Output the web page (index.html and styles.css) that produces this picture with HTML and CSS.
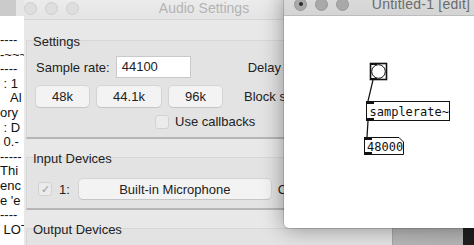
FILE: index.html
```
<!DOCTYPE html>
<html lang="en">
<head>
    <meta charset="UTF-8">
    <title>Pd - Audio Settings</title>
    <link rel="stylesheet" href="styles.css">
</head>
<body>

    <!-- Pd main window, mostly hidden behind the dialog -->
    <div class="console">
        <div class="console-bar"></div>
        <div class="console-log">
            <div>----</div>
            <div>-~~~</div>
            <div>----</div>
            <div> : 1</div>
            <div>   Al</div>
            <div>ory</div>
            <div> : D</div>
            <div> 0.-</div>
            <div>-----</div>
            <div>Thi</div>
            <div>enc</div>
            <div>e 'e</div>
            <div>----</div>
            <div> LOT</div>
        </div>
    </div>

    <div class="window audio">
        <div class="titlebar">
            <div class="lights">
                <span class="light"></span>
                <span class="light"></span>
                <span class="light"></span>
            </div>
            <div class="title">Audio Settings</div>
        </div>

        <div class="audio-body">
            <section class="group">
                <div class="group-title">Settings</div>
                <div class="row">
                    <span class="label">Sample rate:</span>
                    <span class="entry">44100</span>
                    <span class="side">Delay (msec):</span>
                </div>
                <div class="row row-buttons">
                    <button class="btn btn-small">48k</button>
                    <button class="btn btn-mid">44.1k</button>
                    <button class="btn btn-small">96k</button>
                    <span class="side side-block">Block size:</span>
                </div>
                <div class="row row-check">
                    <span class="check"></span>
                    <span class="label">Use callbacks</span>
                </div>
            </section>

            <section class="group">
                <div class="group-title">Input Devices</div>
                <div class="row row-device">
                    <span class="check checked">&#10003;</span>
                    <span class="num">1:</span>
                    <button class="btn device">Built-in Microphone</button>
                    <span class="chan">Channels:</span>
                    <span class="entry entry-chan">2</span>
                </div>
            </section>

            <section class="group">
                <div class="group-title">Output Devices</div>
                <div class="row row-device row-out">
                    <span class="check checked">&#10003;</span>
                    <span class="num">1:</span>
                    <button class="btn device">Built-in Output</button>
                    <span class="chan">Channels:</span>
                    <span class="entry entry-chan">2</span>
                </div>
            </section>
        </div>
    </div>

    <div class="window patch">
        <div class="titlebar patch-bar">
            <div class="lights">
                <span class="light dirty"></span>
                <span class="light"></span>
                <span class="light"></span>
            </div>
            <div class="title">Untitled-1 [edit]</div>
        </div>

        <svg class="canvas" width="264" height="212" viewBox="0 0 264 212">
            <!-- cords -->
            <line x1="89" y1="64" x2="84" y2="85" class="cord"/>
            <line x1="84" y1="105" x2="83" y2="121" class="cord"/>

            <!-- bng -->
            <rect x="86.5" y="47.5" width="16" height="16" class="box thick"/>
            <circle cx="94.5" cy="55.5" r="6.8" class="box"/>
            <rect x="86" y="47" width="7" height="2" class="port"/>
            <rect x="86" y="62" width="7" height="2" class="port"/>

            <!-- samplerate~ -->
            <rect x="82.5" y="85.5" width="83" height="19" class="box"/>
            <rect x="82" y="85" width="8" height="3" class="port"/>
            <rect x="82" y="102" width="8" height="3" class="port"/>
            <text x="85.5" y="100" class="obj-text">samplerate~</text>

            <!-- number box -->
            <path d="M80.5 121.5 H115 L119.5 126 V138.5 H80.5 Z" class="box"/>
            <rect x="80" y="121" width="8" height="3" class="port"/>
            <rect x="80" y="136" width="8" height="3" class="port"/>
            <text x="83" y="135" class="obj-text">48000</text>
        </svg>
    </div>

</body>
</html>
```

FILE: styles.css
```
body {
    margin: 0;
    width: 474px;
    height: 245px;
    overflow: hidden;
    position: relative;
    background: linear-gradient(to right, #c4c4c4 0, #b4b4b4 463px, #1f1f1f 463px);
    font-family: 'Liberation Sans', Arial, sans-serif;
    font-size: 13px;
    color: #222;
}

/* Pd main window (console) */
.console {
    position: absolute;
    left: 0;
    top: 0;
    width: 40px;
    height: 245px;
    background: #fff;
}

.console-bar {
    height: 16px;
    background: linear-gradient(to right, #cbcbcb 16px, #e6e6e6 16px);
}

.console-log {
    padding-top: 17px;
    line-height: 14.6px;
    color: #111;
}

.console-log div {
    white-space: pre;
}

/* shared window parts */
.window {
    position: absolute;
    overflow: hidden;
}

.titlebar {
    height: 22px;
    display: grid;
    grid-template-columns: 1fr auto 1fr;
    align-items: center;
    background: linear-gradient(#ededed, #e4e4e4);
    border-bottom: 1px solid #d6d6d6;
}

.lights {
    display: flex;
    gap: 8px;
}

.light {
    width: 11px;
    height: 11px;
    border-radius: 50%;
    background: #dedede;
    border: 0.5px solid #cecece;
}

.title {
    font-size: 14px;
    color: #b3b3b3;
    white-space: nowrap;
}

/* Audio settings dialog */
.audio {
    left: 24px;
    top: -3px;
    width: 368px;
    height: 262px;
    background: #e8e8e8;
    border-right: 1px solid #a4a4a4;
}

.audio .titlebar {
    padding-right: 8px;
}

.audio-body {
    padding-left: 2px;
}

.group {
    margin-top: 20px;
    padding: 0 0 0 9px;
    background: #e3e3e3;
    border-top: 1px solid #d7d7d7;
    border-left: 1px solid #d7d7d7;
    border-bottom: 2px solid #b6b6b6;
}

.group + .group {
    margin-top: 18px;
}

.group-title {
    margin: -7px 0 0 -3px;
    line-height: 16px;
}

.row {
    display: flex;
    align-items: center;
    margin-top: 6px;
    white-space: nowrap;
}

.entry {
    width: 68px;
    height: 20px;
    line-height: 20px;
    padding-left: 5px;
    margin-left: 6px;
    background: #fff;
    border: 1px solid #c9c9c9;
}

.side {
    margin-left: 57px;
}

.row-buttons {
    margin-top: 8px;
}

.btn {
    height: 21px;
    margin: 0 8px 0 0;
    padding: 0;
    font: inherit;
    color: #222;
    background: #f3f3f3;
    border: none;
    border-radius: 4px;
    box-shadow: 0 0 0 0.5px rgba(0, 0, 0, 0.12), 0 1px 1px rgba(0, 0, 0, 0.08);
}

.btn-small {
    width: 53px;
}

.btn-mid {
    width: 64px;
}

.side-block {
    margin-left: 14px;
}

.row-check {
    margin-top: 7px;
    padding-bottom: 8px;
}

.check {
    width: 12px;
    height: 12px;
    margin: 0 6px 0 119px;
    border: 1px solid #d2d2d2;
    border-radius: 3px;
    background: #ebebeb;
    font-size: 11px;
    line-height: 12px;
    text-align: center;
    color: #9c9c9c;
}

.row-device {
    margin-top: 11px;
    padding-bottom: 8px;
}

.row-device .check {
    margin: 0 7px 0 2px;
}

.num {
    margin-right: 9px;
}

.device {
    width: 192px;
    height: 20px;
    margin-right: 7px;
}

.entry-chan {
    width: 26px;
    margin-left: 8px;
}

.row-out {
    margin-top: 8px;
}

/* Pd patch window */
.patch {
    left: 284px;
    top: -7px;
    width: 264px;
    height: 235px;
    background: #fff;
    border-radius: 0 0 5px 5px;
    box-shadow: 0 0 22px rgba(0, 0, 0, 0.4), 0 0 0 1px rgba(0, 0, 0, 0.12);
}

.patch-bar {
    padding-left: 10px;
    background: linear-gradient(#dcdcdc, #d4d4d4);
    border-bottom: 1px solid #bcbcbc;
}

.patch-bar .light {
    background: #a9a9a9;
    border-color: #979797;
    position: relative;
}

.patch-bar .dirty::after {
    content: '';
    position: absolute;
    left: 3.5px;
    top: 3.5px;
    width: 4px;
    height: 4px;
    border-radius: 50%;
    background: #2c2c2c;
}

.patch-bar .title {
    color: #6b6b6b;
    letter-spacing: 0.25px;
}

.canvas {
    display: block;
}

.cord {
    stroke: #111;
    stroke-width: 1.2;
}

.box {
    fill: none;
    stroke: #111;
    stroke-width: 1;
}

.thick {
    stroke-width: 1.6;
}

.port {
    fill: #111;
}

.obj-text {
    font-family: 'DejaVu Sans Mono', monospace;
    font-size: 12px;
    fill: #111;
}
```
